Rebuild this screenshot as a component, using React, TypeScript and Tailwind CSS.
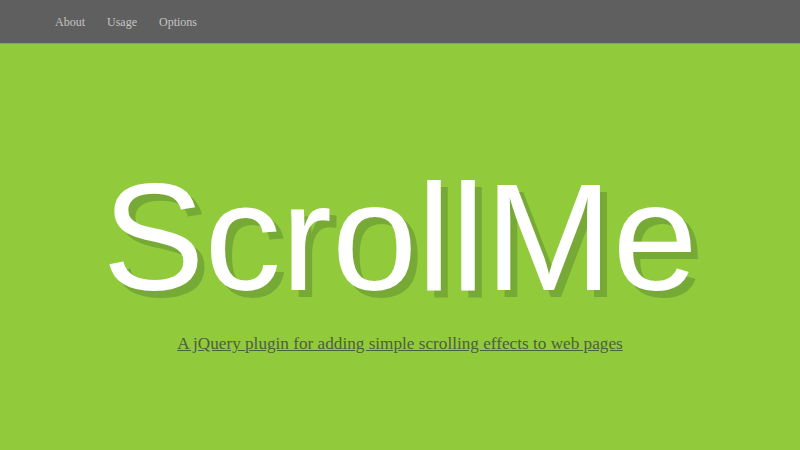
export default function App() {
  return (
    <div className="w-[800px] h-[450px] overflow-hidden bg-[#91cb3b] flex flex-col">
      <nav className="h-[44px] shrink-0 bg-[#5f5f5f] border-b border-[#7fae3c] flex items-center pl-[55px] gap-[22px] font-['Liberation_Serif',serif] text-[12px] text-[#c4c4c4]">
        <span>About</span>
        <span>Usage</span>
        <span>Options</span>
      </nav>
      <main className="flex flex-col items-center pt-[116px]">
        <h1 className="font-['Liberation_Sans',Arial,sans-serif] text-[153px] leading-none text-white [text-shadow:7px_7px_0_#76a935]">
          ScrollMe
        </h1>
        <a className="mt-[18px] font-['Liberation_Serif',serif] text-[17.2px] text-[#4f5e3c] underline">
          A jQuery plugin for adding simple scrolling effects to web pages
        </a>
      </main>
    </div>
  );
}
